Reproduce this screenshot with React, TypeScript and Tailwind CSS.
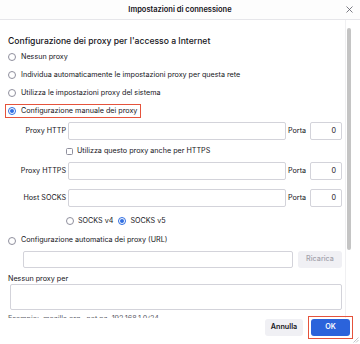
import React from 'react';

const font = { fontFamily: 'Inter, "Noto Sans", sans-serif' };

function Radio({ checked = false }: { checked?: boolean }) {
  if (checked) {
    return (
      <span className="flex h-[8px] w-[8px] shrink-0 items-center justify-center rounded-full border border-[#2f6de1] bg-white">
        <span className="h-[4px] w-[4px] rounded-full bg-[#2f6de1]" />
      </span>
    );
  }
  return <span className="h-[8px] w-[8px] shrink-0 rounded-full border border-[#8f8f9d] bg-white" />;
}

function RadioRow({ label, h = 'h-[18px]' }: { label: string; h?: string }) {
  return (
    <div className={`flex items-center gap-[5px] ${h}`}>
      <Radio />
      <span>{label}</span>
    </div>
  );
}

function ProxyRow({ label, className = '' }: { label: string; className?: string }) {
  return (
    <div className={`flex h-[18px] items-center ${className}`}>
      <span className="w-[58px] text-right">{label}</span>
      <div className="ml-[2px] h-full w-[218px] rounded-[2px] border border-[#d3d3da] bg-white" />
      <span className="ml-[2px] w-[22px]">Porta</span>
      <div className="flex h-full w-[32px] items-center justify-end rounded-[2px] border border-[#d3d3da] bg-white pr-[5px]">
        0
      </div>
    </div>
  );
}

export default function App() {
  return (
    <div
      className="relative flex h-[344px] w-[360px] flex-col overflow-hidden bg-white text-[7.2px] text-[#15141a]"
      style={font}
    >
      {/* Title bar */}
      <div className="relative flex h-[20px] shrink-0 items-center justify-center border-b border-[#e6e6ea] bg-[#fdfdfd]">
        <span className="text-[7.5px] font-semibold">Impostazioni di connessione</span>
        <svg className="absolute right-[7px] top-[6px]" width="7" height="7" viewBox="0 0 7 7">
          <path d="M0.5 0.5L6.5 6.5M6.5 0.5L0.5 6.5" stroke="#5b5b66" strokeWidth="0.8" />
        </svg>
      </div>

      {/* Scrollable content */}
      <div className="relative h-[298px] shrink-0 overflow-hidden pl-[8px] pr-[18px] pt-[15px]">
        <div className="flex h-[13px] items-center text-[8.6px] font-medium">
          Configurazione dei proxy per l'accesso a Internet
        </div>
        <RadioRow label="Nessun proxy" />
        <RadioRow label="Individua automaticamente le impostazioni proxy per questa rete" />
        <RadioRow label="Utilizza le impostazioni proxy del sistema" />
        <div className="flex h-[18px] items-center">
          <div className="-ml-[3px] flex h-[14px] items-center gap-[5px] border border-[#e5533c] pl-[2px] pr-[3px]">
            <Radio checked />
            <span>Configurazione manuale dei proxy</span>
          </div>
        </div>

        <ProxyRow label="Proxy HTTP" className="mt-[2px]" />
        <div className="flex h-[22px] items-center gap-[4px] pl-[58px]">
          <span className="h-[7px] w-[7px] rounded-[1.5px] border border-[#8f8f9d] bg-white" />
          <span>Utilizza questo proxy anche per HTTPS</span>
        </div>
        <ProxyRow label="Proxy HTTPS" />
        <ProxyRow label="Host SOCKS" className="mt-[9px]" />

        <div className="mt-[5px] flex h-[18px] items-center pl-[58px]">
          <Radio />
          <span className="ml-[4px]">SOCKS v4</span>
          <span className="ml-[5px]">
            <Radio checked />
          </span>
          <span className="ml-[4px]">SOCKS v5</span>
        </div>

        <RadioRow label="Configurazione automatica dei proxy (URL)" h="h-[21px]" />
        <div className="flex h-[17px] items-stretch">
          <div className="ml-[15px] w-[270px] rounded-[2px] border border-[#d3d3da] bg-white" />
          <div className="ml-[5px] flex w-[44px] items-center justify-center rounded-[3px] bg-[#f0f0f4] font-medium text-[#a2a2ab]">
            Ricarica
          </div>
        </div>

        <div className="mt-[6px] h-[10px] leading-[10px]">Nessun proxy per</div>
        <div className="ml-[2px] h-[26px] w-[332px] rounded-[2px] border border-[#d3d3da] bg-white" />
        <div className="mt-[4px] text-[#5b5b66]">Esempio: .mozilla.org, .net.nz, 192.168.1.0/24</div>

        {/* Scrollbar */}
        <div className="absolute right-[14px] top-0 h-full w-px bg-[#f0f0f2]" />
        <div className="absolute right-[9px] top-[8px] h-[222px] w-[4px] rounded-full bg-[#c4c4c4]" />
      </div>

      {/* Footer */}
      <div className="relative flex flex-1 items-start justify-end bg-white pr-[7px]">
        <button className="mt-[1px] flex h-[17px] w-[38px] items-center justify-center rounded-[3px] bg-[#f0f0f4] font-semibold text-[#15141a]">
          Annulla
        </button>
        <div className="-mt-[2px] ml-[5px] border border-[#e5533c] p-[2px]">
          <button className="flex h-[17px] w-[39px] items-center justify-center rounded-[3px] bg-[#2b63db] font-semibold text-white">
            OK
          </button>
        </div>
        <svg className="absolute bottom-[1px] right-[1px]" width="6" height="6" viewBox="0 0 6 6">
          <path d="M0.5 5.5L5.5 0.5M3 5.5L5.5 3" stroke="#9a9aa3" strokeWidth="0.6" />
        </svg>
      </div>
    </div>
  );
}
